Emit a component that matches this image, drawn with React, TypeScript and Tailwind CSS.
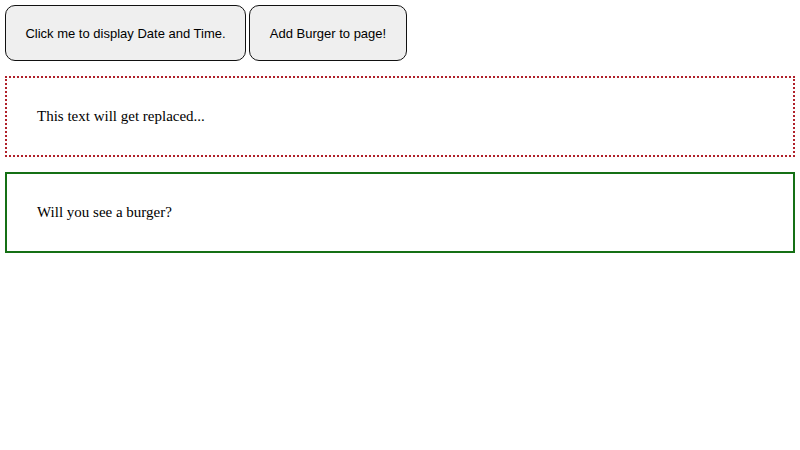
export default function App() {
  return (
    <div className="bg-white min-h-screen pt-[5px] px-[5px]">
      <div className="flex gap-[3px]">
        <button className="h-[56px] w-[241px] pt-[2px] rounded-[10px] border-[1.5px] border-[#111] bg-[#efefef] text-[13px] text-black font-['Liberation_Sans',Arial,sans-serif]">
          Click me to display Date and Time.
        </button>
        <button className="h-[56px] w-[158px] pt-[2px] rounded-[10px] border-[1.5px] border-[#111] bg-[#efefef] text-[13px] text-black font-['Liberation_Sans',Arial,sans-serif]">
          Add Burger to page!
        </button>
      </div>
      <div className="mt-[15px] h-[81px] flex items-center border-2 border-dotted border-[#b0202a] px-[30px] font-['Liberation_Serif','Times_New_Roman',serif] text-[15px] text-black">
        This text will get replaced...
      </div>
      <div className="mt-[15px] h-[81px] flex items-center border-2 border-[#157015] px-[30px] font-['Liberation_Serif','Times_New_Roman',serif] text-[15px] text-black">
        Will you see a burger?
      </div>
    </div>
  );
}
